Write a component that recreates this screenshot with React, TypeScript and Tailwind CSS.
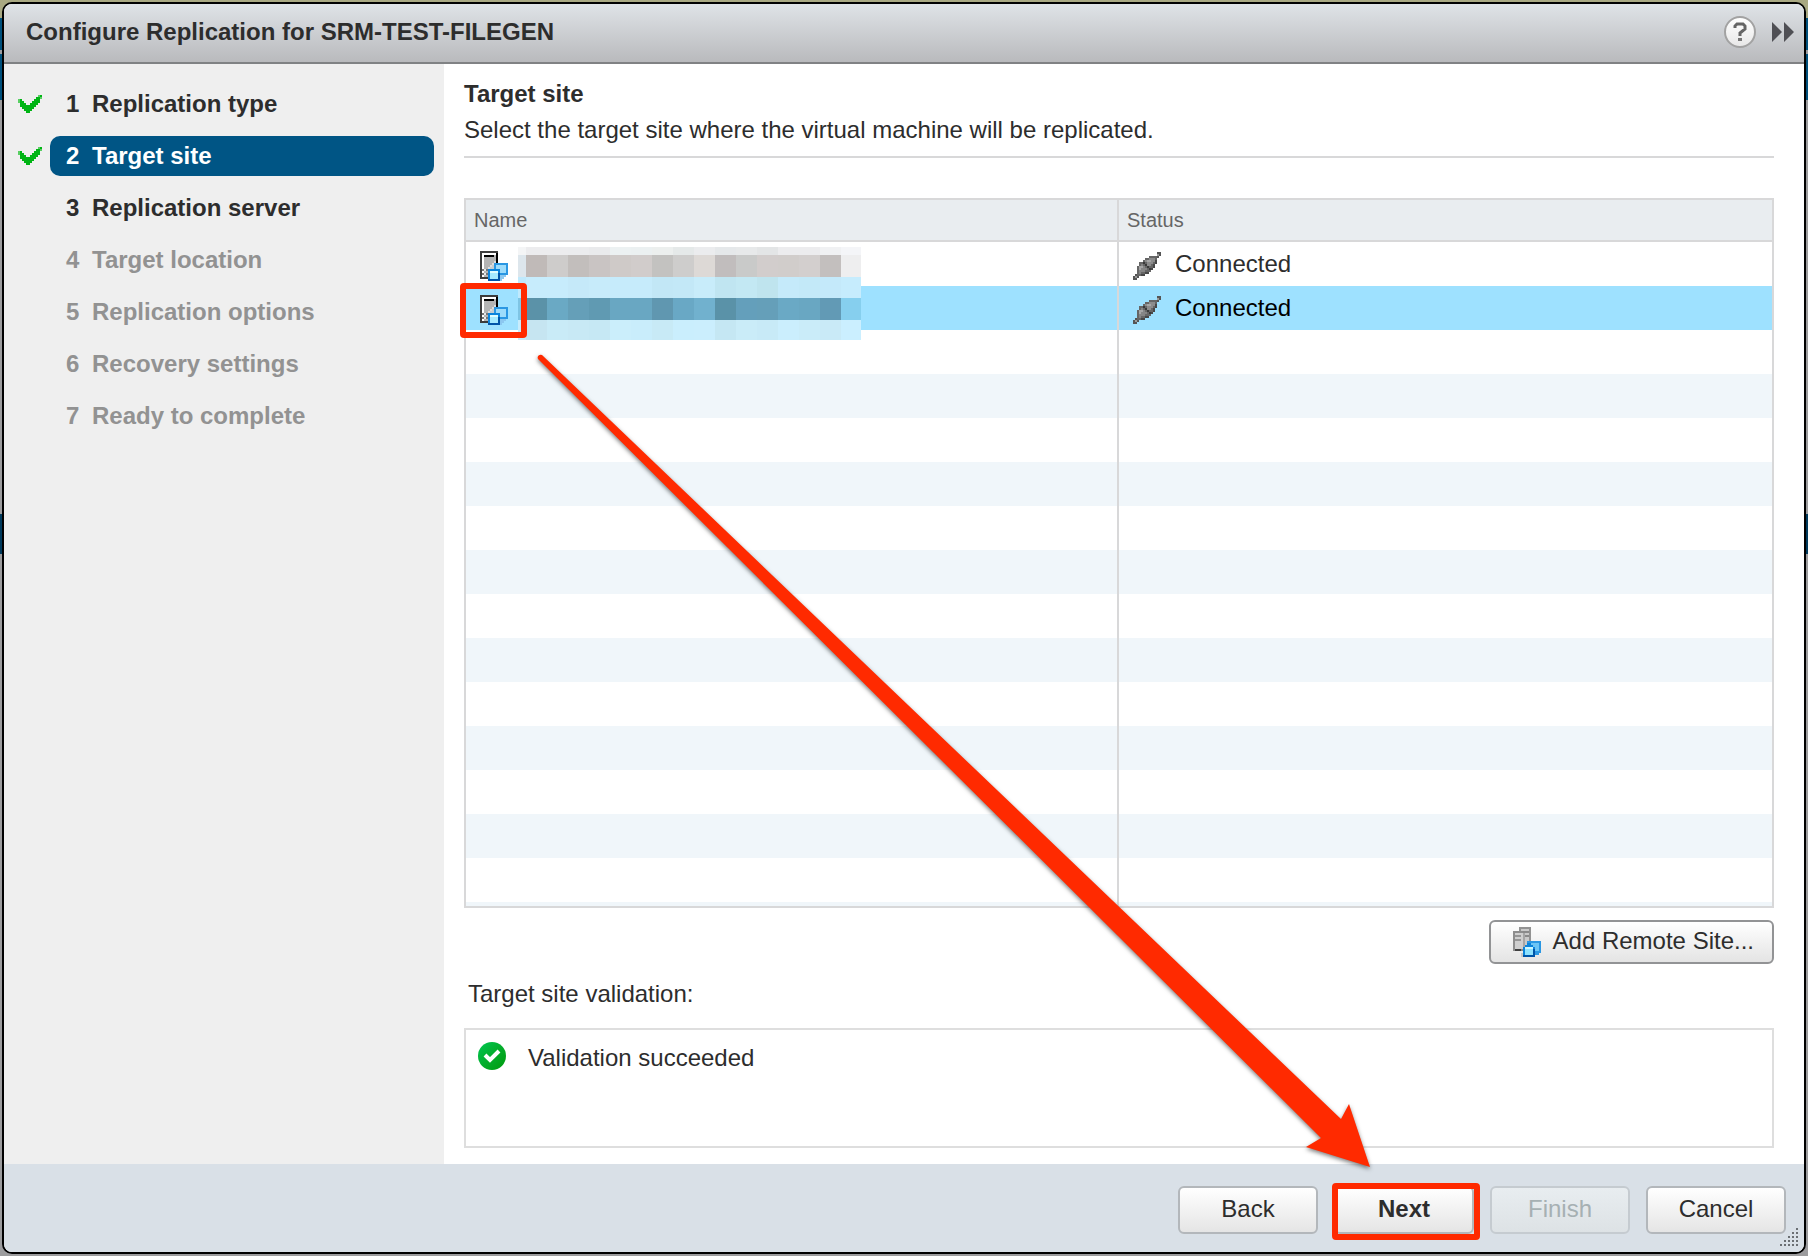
import React from 'react';
import clsx from 'clsx';

interface Step {
  id: number;
  label: string;
  done?: boolean;
  enabled: boolean;
}

const STEPS: Step[] = [
  { id: 1, label: 'Replication type', done: true, enabled: true },
  { id: 2, label: 'Target site', done: true, enabled: true },
  { id: 3, label: 'Replication server', enabled: true },
  { id: 4, label: 'Target location', enabled: false },
  { id: 5, label: 'Replication options', enabled: false },
  { id: 6, label: 'Recovery settings', enabled: false },
  { id: 7, label: 'Ready to complete', enabled: false },
];

const CURRENT_STEP = 2;

const SITES = [
  { id: 'site-a', status: 'Connected', selected: false },
  { id: 'site-b', status: 'Connected', selected: true },
];

const EMPTY_ROWS = 13;

// Pixelated cover for the site names: one line of colours per band
const MOSAIC = [
  { y: 0, height: 8, colors: ['#f4f5f6', '#ececee', '#ececee', '#ebecee', '#e9eaec', '#ecf1f2', '#ebf0f1', '#ecefee', '#e5e9e9', '#ebecee', '#e5e8ea', '#e7e9ea', '#e3e5e6', '#ececee', '#ececee', '#f0f1f3', '#f4f5f8'] },
  { y: 8, height: 22, colors: ['#dde6ec', '#c0bab8', '#cecccb', '#c2bebc', '#c9c4c3', '#cfcac8', '#d1cccb', '#c3c2c0', '#cecdcc', '#ddd9d6', '#c1bdbd', '#c9cac9', '#d2cdcc', '#d1cdcb', '#d3cfce', '#c3bfbe', '#eeeeef'] },
  { y: 30, height: 21, colors: ['#bfe9fc', '#c7ecfc', '#c7ecfc', '#c5e9f9', '#c7ebfa', '#c6ebfb', '#c6ebfb', '#c2e7f6', '#c3e8f7', '#c8ecfa', '#c0e5f1', '#c3e8f3', '#bfe4ee', '#c5eafa', '#c3e9f8', '#c4e9fa', '#c6ecfd'] },
  { y: 51, height: 22, colors: ['#7fc5e4', '#5b92a8', '#6aa9c4', '#659fb8', '#609ab2', '#69a7c2', '#69a7c2', '#6097b0', '#69a8c5', '#71b1ce', '#5a92a8', '#649fbb', '#659fb9', '#6aa9c5', '#69a7c2', '#629ab5', '#86cfee'] },
  { y: 73, height: 20, colors: ['#c8ecfc', '#c6e5f1', '#c9ebf7', '#c8e9f5', '#c6e8f4', '#cbeefb', '#c9edfb', '#c8eaf6', '#caeefd', '#cbeefd', '#c5e7f3', '#caecf8', '#c8eaf7', '#cbeefd', '#caecf9', '#c9eaf7', '#cbefff'] },
];

function StepCheck() {
  return (
    <svg width="24" height="18" viewBox="0 0 12 9" shapeRendering="crispEdges" aria-hidden="true">
      <path
        d="M0 2h2v1h1v1h1v1h2V4h1V3h1V2h1V1h1V0h2v2h-1v2h-1v1H9v1H8v1H7v1H6v1H4V8H3V7H2V6H1V4H0z"
        fill="#00b414"
      />
      <path d="M0 2h1v1H0zM0 3h1v1H0zM10 0h1v1h-1zM11 1h1v1h-1z" fill="#58cf62" />
    </svg>
  );
}

function MonitorPair() {
  return (
    <>
      <path d="M7 6h7v6h-1v1h-1v1h-1v1h-1V9H7z" fill="#2a97e3" />
      <path d="M8 7h5v4h-3V9H8z" fill="#9ddcfb" />
      <path d="M10 12h3v1h-1v1h-1v1h-1z" fill="#8cc8f0" />
      <path d="M4 9h6v6H4z" fill="#0a84dc" />
      <path d="M4 14h6v1H4zM9 11h1v4H9z" fill="#0054a8" />
      <path d="M5 10h4v4H5z" fill="#a5eaff" />
      <path d="M5 10h4v1H5z" fill="#dcfcff" />
    </>
  );
}

function ServerIcon() {
  return (
    <svg width="28" height="30" viewBox="0 0 14 15" shapeRendering="crispEdges" aria-hidden="true">
      <path d="M0 0h9v14H0z" fill="#3c3c3c" />
      <path d="M8 1h1v5H8z" fill="#000" />
      <path d="M1 1h7v12H1z" fill="#fff" />
      <path d="M2 2h6v11H2z" fill="#b4b4b4" />
      <path d="M2 2h5v1H2z" fill="#000" />
      <path d="M1 9h1v1H1zM1 11h1v1H1z" fill="#777" />
      <path d="M2 9h1v1H2zM2 11h1v1H2z" fill="#e8e8e8" />
      <path d="M3 9h1v1H3zM3 11h1v1H3z" fill="#777" />
      <path d="M4 8h1V7h1V6h1V5h1v1h1v3H4z" fill="#dcdcdc" />
      <path d="M5 8h1V7h1V6h2v3H5z" fill="#c4cdd2" />
      <path d="M4 13h1v1H4z" fill="#000" />
      <MonitorPair />
    </svg>
  );
}

function AddSiteIcon() {
  return (
    <svg width="28" height="30" viewBox="0 0 14 15" shapeRendering="crispEdges" aria-hidden="true">
      <path d="M3 0h6v10H3z" fill="#929292" />
      <path d="M4 1h4v8H4z" fill="#c9c9c9" />
      <path d="M5 2h3v1H5zM5 4h3v1H5z" fill="#8a8a8a" />
      <path d="M0 2h5v10H0z" fill="#8d8d8d" />
      <path d="M1 3h4v8H1z" fill="#cfcfcf" />
      <path d="M1 4h3v1H1zM1 6h3v1H1z" fill="#969696" />
      <path d="M1 11h3v1H1z" fill="#3f3f3f" />
      <path d="M5 3h1v8H5z" fill="#a6a6a6" />
      <path d="M4 13h1v2H4z" fill="#c8c8c8" />
      <path d="M7 7h7v6h-1v1h-3v1H7z" fill="#2a97e3" />
      <path d="M9 8h4v4h-3v-1H9z" fill="#6cc5f5" />
      <path d="M5 10h1V9h1V8h2v1h1v1h1v5H5z" fill="#0a84dc" />
      <path d="M5 14h6v1H5zM10 11h1v4h-1z" fill="#0054a8" />
      <path d="M6 10h4v4H6z" fill="#8ee2ff" />
      <path d="M6 10h4v1H6z" fill="#ccf7ff" />
    </svg>
  );
}

function PlugIcon() {
  return (
    <svg width="28" height="28" viewBox="0 0 14 14" shapeRendering="crispEdges" aria-hidden="true">
      <path d="M12 0h2v2h-1v1h-1z" fill="#555" />
      <path d="M0 12h1v-1h2v2H2v1H0z" fill="#555" />
      <path d="M1 12h1v1H1zM12 1h1v1h-1z" fill="#9a9a9a" />
      <path d="M8 2h4v4h-1v2h-1v1H9v1H8v1H6v1H2V7h1V5h2V4h1V3h2z" fill="#666" />
      <path d="M8 3h3v2h-1v1H9v1H7V5H6V4h2z" fill="#8c8c8c" />
      <path d="M3 7h1V6h1v1h1v1h1v1H6v1H4v1H3z" fill="#858585" />
      <path d="M7 4h2v1H7zM3 7h2v1H4v1H3z" fill="#a6a6a6" />
      <path d="M5 5h1v1h1v1h1v1h1v1H8V8H7V7H6V6H5z" fill="#3a3a3a" />
      <path d="M11 4h1v2h-1v2h-1v1H9V8h1V6h1zM6 10h2v1H6v1H4v-1h2z" fill="#484848" />
    </svg>
  );
}

function SuccessIcon() {
  return (
    <svg width="28" height="28" viewBox="0 0 28 28" aria-hidden="true">
      <defs>
        <linearGradient id="ok-fill" x1="0" y1="0" x2="1" y2="1">
          <stop offset="0" stopColor="#00c853" />
          <stop offset="0.5" stopColor="#04ad2c" />
          <stop offset="1" stopColor="#009a0c" />
        </linearGradient>
      </defs>
      <circle cx="14" cy="14" r="14" fill="url(#ok-fill)" />
      <path d="M7 13l5 5 9-9" fill="none" stroke="#fff" strokeWidth="4" />
    </svg>
  );
}

function ResizeGrip() {
  const dots = [];
  for (let row = 0; row < 5; row++) {
    for (let col = 4 - row; col < 5; col++) {
      dots.push(<rect key={`${row}-${col}`} x={col * 4} y={row * 4} width="2" height="2" />);
    }
  }
  return (
    <svg width="18" height="18" viewBox="0 0 18 18" fill="#6b6f73" aria-hidden="true">
      {dots}
    </svg>
  );
}

function NameMosaic() {
  return (
    <svg
      className="pointer-events-none absolute left-[54px] top-[49px]"
      width="343"
      height="93"
      shapeRendering="crispEdges"
      aria-hidden="true"
    >
      {MOSAIC.map((band) =>
        band.colors.map((color, i) => (
          <rect
            key={`${band.y}-${i}`}
            x={i === 0 ? 0 : 8 + (i - 1) * 21}
            y={band.y}
            width={i === 0 ? 8 : 21}
            height={band.height}
            fill={color}
          />
        ))
      )}
    </svg>
  );
}

// Callout arrow from the selected site to the Next button
function CalloutArrow() {
  return (
    <svg
      className="pointer-events-none absolute left-0 top-0 drop-shadow-[0_2px_2px_rgba(0,0,0,0.5)]"
      width="1400"
      height="1200"
      aria-hidden="true"
    >
      <path
        d="M542 355L1341 1119L1349 1104L1370 1167L1306 1147L1321 1138L538 359A3 3 0 0 1 542 355z"
        fill="#ff2a00"
      />
    </svg>
  );
}

interface FooterButtonProps {
  children: React.ReactNode;
  disabled?: boolean;
  primary?: boolean;
}

function FooterButton({ children, disabled, primary }: FooterButtonProps) {
  return (
    <button
      type="button"
      disabled={disabled}
      className={clsx(
        'h-12 w-[140px] rounded-md border-2 pb-0.5 text-2xl',
        disabled
          ? 'border-[#c5cbd0] bg-linear-to-b from-[#e8edf0] to-[#dde2e5] text-[#a6b0b3]'
          : 'border-[#b3b7bb] bg-linear-to-b from-white to-[#e5e5e5] text-[#2d2d2d]',
        primary && 'font-bold'
      )}
    >
      {children}
    </button>
  );
}

function WizardSteps() {
  return (
    <nav className="w-[440px] shrink-0 bg-[#efefef] pt-3.5" aria-label="Wizard steps">
      <ol>
        {STEPS.map((step) => {
          const current = step.id === CURRENT_STEP;

          return (
            <li key={step.id} className="flex h-13 items-center pr-2.5">
              <span className="w-[46px] pl-3.5">{step.done && <StepCheck />}</span>
              <button
                type="button"
                disabled={!step.enabled}
                aria-current={current ? 'step' : undefined}
                className={clsx(
                  'flex h-10 flex-1 items-center rounded-[10px] pl-4 text-left text-2xl font-bold',
                  current && 'bg-[#005585] text-white',
                  !current && step.enabled && 'text-[#2d2d2d]',
                  !step.enabled && 'text-[#929292]'
                )}
              >
                <span className="w-[26px]">{step.id}</span>
                <span>{step.label}</span>
              </button>
            </li>
          );
        })}
      </ol>
    </nav>
  );
}

function SiteTable() {
  return (
    <div className="relative mt-10">
      <table className="w-full table-fixed border-separate border-spacing-0 border-2 border-[#d8d8d9]">
        <thead>
          <tr className="h-[42px] bg-[#e9edf0] text-left text-xl text-[#666666]">
            <th scope="col" className="w-1/2 border-b-2 border-r-2 border-[#d8d8d9] pl-2 font-normal">
              Name
            </th>
            <th scope="col" className="w-1/2 border-b-2 border-[#d8d8d9] pl-2 font-normal">
              Status
            </th>
          </tr>
        </thead>
        <tbody>
          {SITES.map((site) => (
            <tr
              key={site.id}
              aria-selected={site.selected}
              className={clsx('h-11', site.selected ? 'bg-[#9ee1ff] text-black' : 'bg-white')}
            >
              <td className="border-r-2 border-[#d8d8d9] p-0 pl-3.5">
                <div className="pt-1">
                  <ServerIcon />
                </div>
              </td>
              <td className="p-0 pl-3.5">
                <div className="flex h-11 items-center gap-3.5">
                  <span className="pt-1">
                    <PlugIcon />
                  </span>
                  <span>{site.status}</span>
                </div>
              </td>
            </tr>
          ))}
          {Array.from({ length: EMPTY_ROWS }, (_, i) => (
            <tr key={i} className="h-11 even:bg-[#f0f6fa]">
              <td className="border-r-2 border-[#d8d8d9] p-0" />
              <td className="p-0" />
            </tr>
          ))}
          <tr className="h-1 bg-[#f0f6fa]">
            <td className="border-r-2 border-[#d8d8d9] p-0" />
            <td className="p-0" />
          </tr>
        </tbody>
      </table>
      <NameMosaic />
      <span className="pointer-events-none absolute -left-1 top-[85px] h-[55px] w-[67px] rounded-sm border-6 border-[#ff2a00]" />
    </div>
  );
}

export default function App() {
  return (
    <div className="relative flex min-h-screen bg-[linear-gradient(to_bottom,#a8a882_0,#a8a882_18px,#00507c_18px,#00507c_50px,#9c9ca0_50px,#9c9ca0_54px,#00507c_54px,#00507c_100px,#9c9c9e_100px,#9c9c9e_514px,#003a5c_514px,#003a5c_554px,#9c9c9e_554px)] p-0.5 font-['Liberation_Sans',Arial,sans-serif] text-2xl text-[#2d2d2d]">
      <div className="flex flex-1 flex-col overflow-hidden rounded-[10px] border-2 border-black bg-white">
        <header className="flex h-15 items-center justify-between border-b-2 border-[#808284] bg-linear-to-b from-[#dfe3e7] to-[#b9babd] pb-0.5 pl-[22px] pr-2.5">
          <h1 className="font-bold">Configure Replication for SRM-TEST-FILEGEN</h1>
          <div className="flex items-center gap-4">
            <button
              type="button"
              aria-label="Help"
              className="flex size-8 items-center justify-center rounded-full border-2 border-[#a2a2a2] bg-linear-to-b from-white to-[#e8e8e8]"
            >
              <svg width="14" height="20" viewBox="0 0 14 20" aria-hidden="true">
                <path d="M2 6V4l2-2h6l2 2v3l-5 4v3" fill="none" stroke="#666" strokeWidth="3" />
                <path d="M5 16h4v3H5z" fill="#777" />
              </svg>
            </button>
            <button type="button" aria-label="Expand">
              <svg width="22" height="20" viewBox="0 0 22 20" fill="#4f4f54" aria-hidden="true">
                <path d="M0 0l10 10L0 20zM12 0l10 10-10 10z" />
              </svg>
            </button>
          </div>
        </header>

        <div className="flex flex-1">
          <WizardSteps />

          <main className="min-w-0 flex-1 pb-4 pl-5 pr-[30px] pt-3">
            <div className="border-b-2 border-[#d8d8d9] pb-2 leading-9">
              <h2 className="font-bold">Target site</h2>
              <p>Select the target site where the virtual machine will be replicated.</p>
            </div>

            <SiteTable />

            <div className="mt-3 flex justify-end">
              <button
                type="button"
                className="flex h-11 items-center gap-3 rounded-md border-2 border-[#929395] bg-linear-to-b from-white to-[#e4e4e4] pl-[22px] pr-[18px]"
              >
                <AddSiteIcon />
                <span className="pb-0.5">Add Remote Site...</span>
              </button>
            </div>

            <h3 className="mt-3 pl-1 leading-9">Target site validation:</h3>
            <div role="status" className="mt-4 flex h-[120px] gap-5.5 border-2 border-[#dedede] pl-3 pt-3">
              <SuccessIcon />
              <span className="leading-8">Validation succeeded</span>
            </div>
          </main>
        </div>

        <footer className="relative flex h-22 items-center justify-end gap-4 bg-[#d9e0e7] pr-[18px] pt-1">
          <FooterButton>Back</FooterButton>
          <div className="relative">
            <FooterButton primary>Next</FooterButton>
            <span className="pointer-events-none absolute -bottom-1.5 -left-0.5 -right-1.5 -top-[3px] rounded-sm border-6 border-[#ff2a00]" />
          </div>
          <FooterButton disabled>Finish</FooterButton>
          <FooterButton>Cancel</FooterButton>
          <span className="absolute bottom-1.5 right-1.5">
            <ResizeGrip />
          </span>
        </footer>
      </div>
      <CalloutArrow />
    </div>
  );
}
